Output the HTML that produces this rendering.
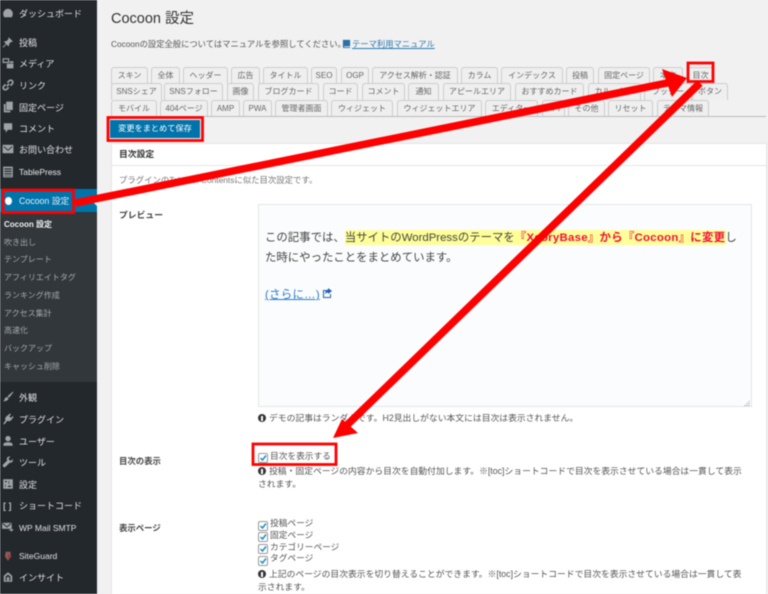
<!DOCTYPE html>
<html lang="ja"><head><meta charset="utf-8"><title>Cocoon 設定</title>
<style>
html,body{margin:0;padding:0;background:#f1f1f1}
#r{position:relative;width:768px;height:594px;overflow:hidden;background:#f1f1f1;font-family:"Liberation Sans","Noto Sans CJK JP",sans-serif;color:#444;filter:blur(.5px)}
#r *{box-sizing:border-box}
.a{position:absolute}
.t{position:absolute;white-space:nowrap;line-height:14px;height:14px}
.m{font-size:9px;color:#dfe1e3;left:19px}
.s{font-size:8px;color:#a5aaaf;left:4px}
.n{font-size:8.800px;color:#555}
.tb{position:absolute;height:17px;border:1px solid #ccc;border-bottom:0;border-radius:3px 3px 0 0;background:#efefef;font-size:8px;line-height:15px;text-align:center;color:#666;white-space:nowrap;overflow:hidden}
.ic{position:absolute;left:2px;width:12px;height:12px;fill:#9ea3a8}
.cb{position:absolute;left:258px;width:9.500px;height:9.500px;background:#fff;border:1px solid #999;border-radius:2px}
.cb svg{position:absolute;left:0;top:0;width:8px;height:8px}
.inf{position:absolute;left:258px;width:8px;height:8px;border-radius:50%;background:#333}
.inf:after{content:"";position:absolute;left:3.300px;top:1.500px;width:1.400px;height:5px;background:#fff}
</style></head><body><div id="r">

<!-- sidebar -->
<div class="a" style="left:0;top:0;width:97px;height:594px;background:#23282d"></div>
<div class="a" style="left:0;top:212px;width:97px;height:170px;background:#32373c"></div>
<div class="a" style="left:0;top:189px;width:97px;height:23px;background:#0073aa"></div>
<div class="a" style="left:92px;top:196px;width:0;height:0;border-top:5px solid transparent;border-bottom:5px solid transparent;border-right:5px solid #f1f1f1"></div>

<svg class="ic" style="top:7px" viewBox="0 0 20 20"><path d="M3.800 17h12.400A8 8 0 0 0 18 11a8 8 0 1 0-16 0c0 2.300.7 4.300 1.800 6z"/></svg>
<div class="t m" style="top:7px">ダッシュボード</div>
<svg class="ic" style="top:36px" viewBox="0 0 20 20"><path d="M11 2l7 7-1.800 1.200-.8-.7-3.500 3.500c.4 1.500 0 3.100-1.100 4.200l-3.200-3.200-5 5-1.500.4.400-1.500 5-5-3.200-3.200c1.100-1.100 2.700-1.500 4.200-1.100l3.500-3.500-.7-.8z"/></svg>
<div class="t m" style="top:36px">投稿</div>
<svg class="ic" style="top:57px" viewBox="0 0 20 20"><path d="M1 2h11v8H1zM3 4v4h7V4zM8 11h11v8H8zM13 7h6v3h-6z"/></svg>
<div class="t m" style="top:57px">メディア</div>
<svg class="ic" style="top:79px" viewBox="0 0 20 20"><path d="M8 12l4-4M6 9l-3 3a3.500 3.500 0 0 0 5 5l3-3M9 6l3-3a3.500 3.500 0 0 1 5 5l-3 3" fill="none" stroke="#9ea3a8" stroke-width="2.800"/></svg>
<div class="t m" style="top:79px">リンク</div>
<svg class="ic" style="top:101px" viewBox="0 0 20 20"><path d="M7 1h11v14H7zM3 5h3v11h8v3H3z"/></svg>
<div class="t m" style="top:101px">固定ページ</div>
<svg class="ic" style="top:122px" viewBox="0 0 20 20"><path d="M3 2h14v11H10l-4 5v-5H3z"/></svg>
<div class="t m" style="top:122px">コメント</div>
<svg class="ic" style="top:143px" viewBox="0 0 20 20"><path d="M1 3h18v14H1z"/><path d="M3 6l7 6 7-6" fill="none" stroke="#23282d" stroke-width="1.500"/></svg>
<div class="t m" style="top:143px">お問い合わせ</div>
<svg class="ic" style="top:166px" viewBox="0 0 20 20"><path d="M2 1h16v18H2zM4 4v2h12V4zM4 8v2h12V8zM4 12v2h12v-2zM4 16v1h12v-1z" fill-rule="evenodd"/></svg>
<div class="t m" style="top:165px;color:#e8e9ea;font-size:8.500px">TablePress</div>
<div class="a" style="left:5px;top:197px;width:7px;height:8px;border-radius:50%;background:#fff"></div>
<div class="t m" style="top:194px;color:#e6f2f8;font-size:8.800px">Cocoon 設定</div>

<div class="t s" style="top:218px;color:#f0f0f0;font-weight:bold">Cocoon 設定</div>
<div class="t s" style="top:236px">吹き出し</div>
<div class="t s" style="top:253px">テンプレート</div>
<div class="t s" style="top:271px">アフィリエイトタグ</div>
<div class="t s" style="top:289px">ランキング作成</div>
<div class="t s" style="top:307px">アクセス集計</div>
<div class="t s" style="top:324px">高速化</div>
<div class="t s" style="top:342px">バックアップ</div>
<div class="t s" style="top:360px">キャッシュ削除</div>

<svg class="ic" style="top:391px" viewBox="0 0 20 20"><path d="M18 1l1 1-7 9-3-2zM8 10l3 2c-1 3-3 5-9 5 3-2 2-6 6-7z"/></svg>
<div class="t m" style="top:391px">外観</div>
<svg class="ic" style="top:413px" viewBox="0 0 20 20"><path d="M13 1l2 1-3 4 3 2 3-3 1 2-4 5c-2 2-4 2-6 1l-5 6-2-1 4-6c-1-2-1-4 1-6z"/></svg>
<div class="t m" style="top:413px">プラグイン</div>
<svg class="ic" style="top:435px" viewBox="0 0 20 20"><circle cx="10" cy="6" r="4.500"/><path d="M2 18c0-5 3-6 8-6s8 1 8 6z"/></svg>
<div class="t m" style="top:435px">ユーザー</div>
<svg class="ic" style="top:456px" viewBox="0 0 20 20"><path d="M18 5l-3 3-3-1-1-3 3-3c-3-1-6 1-6 4 0 1 0 2 1 2l-7 7c-1 1-1 3 0 4s3 1 4 0l7-7c3 1 6-2 5-6z"/></svg>
<div class="t m" style="top:456px">ツール</div>
<svg class="ic" style="top:478px" viewBox="0 0 20 20"><path d="M2 2h16v16H2zM5 5v2h3V5zM11 5v5h1V5zM5 11v4h1v-4zM10 13v2h5v-2z" fill-rule="evenodd"/></svg>
<div class="t m" style="top:478px">設定</div>
<div class="t" style="left:3px;top:499px;font-size:9px;font-weight:bold;color:#b5b9bd">[ ]</div>
<div class="t m" style="top:499px">ショートコード</div>
<svg class="ic" style="top:521px;left:1px;width:13px" viewBox="0 0 20 20"><path d="M1 3h16v10H1z"/><path d="M2 4l7 6 7-6" fill="none" stroke="#23282d" stroke-width="1.500"/><path d="M13 14h3v-2l4 3-4 3v-2h-3z"/></svg>
<div class="t m" style="top:521px;font-size:8.500px">WP Mail SMTP</div>
<svg class="ic" style="top:550px" viewBox="0 0 20 20"><path d="M6 3h8l1 8-5 7-5-7z" fill="#8d5a58"/><path d="M10 8h4l-1 4-3 4z" fill="#a33"/></svg>
<div class="t m" style="top:549px;font-size:8.500px">SiteGuard</div>
<svg class="ic" style="top:571px" viewBox="0 0 20 20"><path d="M3 18V8l7-6 7 6v10zM6 16h8V9l-4-3-4 3z" fill-rule="evenodd"/><path d="M8 10h4v6H8z"/></svg>
<div class="t m" style="top:571px">インサイト</div>

<!-- header -->
<div class="a" style="left:111px;top:9px;font-size:14.500px;line-height:20px;color:#333;white-space:nowrap">Cocoon 設定</div>
<div class="t n" style="left:111px;top:37px;font-size:8.300px">Cocoonの設定全般についてはマニュアルを参照してください。</div>
<svg class="a" style="left:342px;top:39px;width:9px;height:9px" viewBox="0 0 10 10"><path d="M1 1h8v7H3c-1 0-1 1 0 1h6v1H2C1 10 1 9 1 8z" fill="#2a6fa8"/></svg>
<div class="t n" style="left:352px;top:37px;color:#2a7ab0;text-decoration:underline;font-size:8.300px">テーマ利用マニュアル</div>

<!-- tabs row 1 -->
<div class="tb" style="left:111px;top:67px;width:37px">スキン</div>
<div class="tb" style="left:151px;top:67px;width:29px">全体</div>
<div class="tb" style="left:183px;top:67px;width:45px">ヘッダー</div>
<div class="tb" style="left:231px;top:67px;width:29px">広告</div>
<div class="tb" style="left:263px;top:67px;width:45px">タイトル</div>
<div class="tb" style="left:311px;top:67px;width:26px">SEO</div>
<div class="tb" style="left:341px;top:67px;width:28px">OGP</div>
<div class="tb" style="left:372px;top:67px;width:86px">アクセス解析・認証</div>
<div class="tb" style="left:461px;top:67px;width:37px">カラム</div>
<div class="tb" style="left:501px;top:67px;width:62px">インデックス</div>
<div class="tb" style="left:566px;top:67px;width:28px">投稿</div>
<div class="tb" style="left:598px;top:67px;width:52px">固定ページ</div>
<div class="tb" style="left:653px;top:67px;width:30px">本文</div>
<div class="tb" style="left:687px;top:67px;width:27px">目次</div>
<!-- tabs row 2 -->
<div class="tb" style="left:111px;top:83px;width:51px">SNSシェア</div>
<div class="tb" style="left:164px;top:83px;width:59px">SNSフォロー</div>
<div class="tb" style="left:227px;top:83px;width:27px">画像</div>
<div class="tb" style="left:258px;top:83px;width:61px">ブログカード</div>
<div class="tb" style="left:323px;top:83px;width:35px">コード</div>
<div class="tb" style="left:362px;top:83px;width:43px">コメント</div>
<div class="tb" style="left:408px;top:83px;width:31px">通知</div>
<div class="tb" style="left:443px;top:83px;width:68px">アピールエリア</div>
<div class="tb" style="left:515px;top:83px;width:69px">おすすめカード</div>
<div class="tb" style="left:588px;top:83px;width:53px">カルーセル</div>
<div class="tb" style="left:644px;top:83px;width:48px">フッター</div>
<div class="tb" style="left:692px;top:83px;width:36px">ボタン</div>
<!-- tabs row 3 -->
<div class="tb" style="left:111px;top:100px;width:46px">モバイル</div>
<div class="tb" style="left:160px;top:100px;width:48px">404ページ</div>
<div class="tb" style="left:211px;top:100px;width:29px">AMP</div>
<div class="tb" style="left:243px;top:100px;width:29px">PWA</div>
<div class="tb" style="left:275px;top:100px;width:53px">管理者画面</div>
<div class="tb" style="left:331px;top:100px;width:62px">ウィジェット</div>
<div class="tb" style="left:397px;top:100px;width:85px">ウィジェットエリア</div>
<div class="tb" style="left:485px;top:100px;width:53px">エディター</div>
<div class="tb" style="left:542px;top:100px;width:23px">API</div>
<div class="tb" style="left:568px;top:100px;width:37px">その他</div>
<div class="tb" style="left:608px;top:100px;width:45px">リセット</div>
<div class="tb" style="left:657px;top:100px;width:52px">テーマ情報</div>
<div class="a" style="left:111px;top:116px;width:655px;height:1px;background:#bbb"></div>

<!-- save button -->
<div class="a" style="left:110px;top:120px;width:90px;height:18px;background:#0073aa;color:#fff;font-size:8.200px;line-height:18px;text-align:center;white-space:nowrap">変更をまとめて保存</div>

<!-- panel -->
<div class="a" style="left:111px;top:143px;width:656px;height:460px;background:#fff;border:1px solid #e5e5e5"></div>
<div class="a" style="left:112px;top:165px;width:654px;height:1px;background:#e5e5e5"></div>
<div class="t" style="left:119px;top:147px;font-size:8.800px;font-weight:bold;color:#333">目次設定</div>
<div class="t n" style="left:119px;top:173px;color:#777;font-size:8.400px">プラグインのTable of Contentsに似た目次設定です。</div>
<div class="t" style="left:119px;top:208px;font-size:8.800px;font-weight:bold;color:#444">プレビュー</div>
<div class="t" style="left:119px;top:454px;font-size:8.400px;font-weight:bold;color:#444">目次の表示</div>
<div class="t" style="left:119px;top:521px;font-size:8.400px;font-weight:bold;color:#444">表示ページ</div>

<!-- preview -->
<div class="a" style="left:258px;top:204px;width:494px;height:203px;background:#fbfcfd;border:1px solid #e3e5e7"></div>
<div class="a" style="left:345px;top:230px;width:381px;height:15px;background:#ffff99"></div>
<div class="t" style="left:265px;top:231px;height:15px;line-height:15px;font-size:11.400px;color:#444">この記事では、当サイトのWordPressのテーマを<b style="color:#f0103a;font-weight:bold;font-size:11.400px;letter-spacing:.28px">『XeoryBase』から『Cocoon』に変更</b>し</div>
<div class="t" style="left:265px;top:251px;height:15px;line-height:15px;font-size:11.400px;color:#444">た時にやったことをまとめています。</div>
<div class="t" style="left:265px;top:288px;height:15px;line-height:15px;font-size:11.400px;letter-spacing:.3px;color:#2a7ad0;text-decoration:underline">(さらに…)</div>
<svg class="a" style="left:322px;top:288px;width:10px;height:10px" viewBox="0 0 10 10"><path d="M1 2h4v1H2v6h6V6h1v4H1z" fill="#1d62b0"/><path d="M6 0l4 3-4 3V4.500C4.500 4.500 3.500 5 3 6.500 3 4 4 2 6 1.800z" fill="#1d62b0"/></svg>
<svg class="a" style="left:744px;top:401px;width:6px;height:5px" viewBox="0 0 6 5"><path d="M5 0v1M3 2v1M5 2v1M1 4v1M3 4v1M5 4v1" stroke="#999"/></svg>

<!-- notes -->
<div class="inf" style="top:414px"></div>
<div class="t n" style="left:269px;top:411px">デモの記事はランダムです。H2見出しがない本文には目次は表示されません。</div>

<div class="cb" style="top:453px"><svg viewBox="0 0 8 8"><path d="M1.500 4l2 2 3.500-4.500" fill="none" stroke="#1e8cbe" stroke-width="1.500"/></svg></div>
<div class="t" style="left:270px;top:449px;font-size:8.700px;color:#555">目次を表示する</div>
<div class="inf" style="top:467px"></div>
<div class="t n" style="left:269px;top:464px">投稿・固定ページの内容から目次を自動付加します。※[toc]ショートコードで目次を表示させている場合は一貫して表示</div>
<div class="t n" style="left:258px;top:477px">されます。</div>

<div class="cb" style="top:521px"><svg viewBox="0 0 8 8"><path d="M1.500 4l2 2 3.500-4.500" fill="none" stroke="#1e8cbe" stroke-width="1.500"/></svg></div>
<div class="t" style="left:270px;top:516px;font-size:8.700px;color:#555">投稿ページ</div>
<div class="cb" style="top:532px"><svg viewBox="0 0 8 8"><path d="M1.500 4l2 2 3.500-4.500" fill="none" stroke="#1e8cbe" stroke-width="1.500"/></svg></div>
<div class="t" style="left:270px;top:528px;font-size:8.700px;color:#555">固定ページ</div>
<div class="cb" style="top:544px"><svg viewBox="0 0 8 8"><path d="M1.500 4l2 2 3.500-4.500" fill="none" stroke="#1e8cbe" stroke-width="1.500"/></svg></div>
<div class="t" style="left:270px;top:540px;font-size:8.700px;color:#555">カテゴリーページ</div>
<div class="cb" style="top:556px"><svg viewBox="0 0 8 8"><path d="M1.500 4l2 2 3.500-4.500" fill="none" stroke="#1e8cbe" stroke-width="1.500"/></svg></div>
<div class="t" style="left:270px;top:551px;font-size:8.700px;color:#555">タグページ</div>
<div class="inf" style="top:570px"></div>
<div class="t n" style="left:269px;top:567px">上記のページの目次表示を切り替えることができます。※[toc]ショートコードで目次を表示させている場合は一貫して表</div>
<div class="t n" style="left:258px;top:580px">示されます。</div>

<!-- red annotations -->
<svg class="a" style="left:0;top:0" width="768" height="594" viewBox="0 0 768 594">
<g fill="none" stroke="#f00" stroke-width="2.800">
<rect x="108" y="117.500" width="94.500" height="23"/>
<rect x="3" y="190" width="70.500" height="22.500"/>
<rect x="688" y="63" width="25" height="18.500"/>
<rect x="253" y="444" width="83" height="20.500"/>
</g>
<path d="M75 203L672 82" stroke="#f00" stroke-width="7.500"/>
<path d="M687 78L662 69L672 97z" fill="#f00"/>
<path d="M700 83L345 427" stroke="#f00" stroke-width="7.500"/>
<path d="M333 438L342 419L358 433z" fill="#f00"/>
</svg>
</div></body></html>
